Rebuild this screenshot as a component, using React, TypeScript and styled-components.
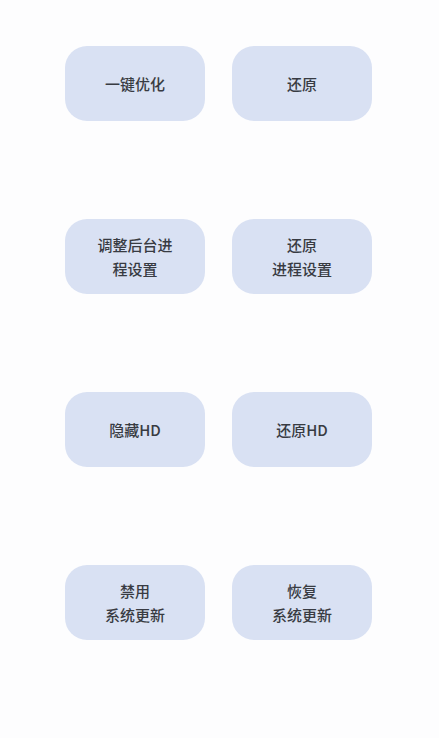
import styled, { createGlobalStyle } from "styled-components";

const GlobalStyle = createGlobalStyle`
    html, body {
        margin: 0;
        padding: 0;
        background: #fdfdfe;
    }
    body {
        font-family: "Noto Sans CJK SC", "Noto Sans", sans-serif;
    }
`;

const Page = styled.div`
    width: 439px;
    height: 738px;
    box-sizing: border-box;
    padding: 46px 0 0 65px;
`;

const Grid = styled.div`
    display: grid;
    grid-template-columns: 140px 140px;
    column-gap: 27px;
    row-gap: 98px;
    align-content: start;
`;

const ActionButton = styled.button`
    width: 140px;
    height: 75px;
    border: none;
    border-radius: 22px;
    background: #d9e1f3;
    color: #383b42;
    font-family: inherit;
    font-size: 15px;
    font-weight: 500;
    line-height: 24px;
    padding: 0;
    display: flex;
    flex-direction: column;
    align-items: center;
    justify-content: center;
    cursor: pointer;
`;

const actions: string[][] = [
    ["一键优化"],
    ["还原"],
    ["调整后台进", "程设置"],
    ["还原", "进程设置"],
    ["隐藏HD"],
    ["还原HD"],
    ["禁用", "系统更新"],
    ["恢复", "系统更新"],
];

export default function App() {
    return (
        <>
            <GlobalStyle />
            <Page>
                <Grid>
                    {actions.map((lines, i) => (
                        <ActionButton key={i}>
                            {lines.map((l, j) => <span key={j}>{l}</span>)}
                        </ActionButton>
                    ))}
                </Grid>
            </Page>
        </>
    );
}
